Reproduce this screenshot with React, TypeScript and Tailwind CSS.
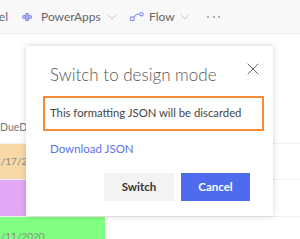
import React from 'react';
import { ChevronDown, X } from 'lucide-react';

const font = { fontFamily: 'Lato, "Open Sans", "Liberation Sans", sans-serif' };

const PowerAppsIcon: React.FC = () => (
  <svg width="10" height="8" viewBox="0 0 10 8" fill="none" stroke="#7b83eb" strokeWidth="1.2" className="shrink-0">
    <circle cx="2" cy="4" r="1.4" />
    <circle cx="5" cy="1.8" r="1.4" />
    <circle cx="8" cy="4" r="1.4" />
    <circle cx="5" cy="6.2" r="1.4" />
  </svg>
);

const FlowIcon: React.FC = () => (
  <svg width="14" height="9" viewBox="0 0 14 9" fill="none" stroke="#8a8fe8" strokeWidth="1.1" className="shrink-0">
    <rect x="0.6" y="5" width="3.4" height="3.4" />
    <circle cx="11.5" cy="2.2" r="1.7" />
    <path d="M4 5 L6.5 2.2 L9.8 2.2" />
  </svg>
);

const CommandBar: React.FC = () => (
  <div className="h-[34px] bg-[#f8f8f8] border-b border-[#ececec] flex items-center text-[12px] text-[#666] shrink-0 whitespace-nowrap">
    <div className="w-[8px] shrink-0 overflow-hidden flex justify-end">
      <span>Excel</span>
    </div>
    <div className="ml-[14px] flex items-center">
      <PowerAppsIcon />
      <span className="ml-[9px] w-[58px] shrink-0">PowerApps</span>
      <ChevronDown size={16} strokeWidth={0.9} className="ml-[5px] shrink-0 text-[#aaa]" />
    </div>
    <div className="ml-[10px] flex items-center">
      <FlowIcon />
      <span className="ml-[5px] w-[23px] shrink-0">Flow</span>
      <ChevronDown size={16} strokeWidth={0.9} className="ml-[5px] shrink-0 text-[#aaa]" />
    </div>
    <div className="ml-[14px] flex items-center gap-[3.5px]">
      <span className="w-[2px] h-[2px] bg-[#999] rounded-full" />
      <span className="w-[2px] h-[2px] bg-[#999] rounded-full" />
      <span className="w-[2px] h-[2px] bg-[#999] rounded-full" />
    </div>
  </div>
);

const Row: React.FC<{ color: string; text?: string; h: string; textClass?: string }> = ({ color, text, h, textClass = '' }) => (
  <div className={`flex border-t border-[#f0f0f0] ${h}`}>
    <div className={`w-[105px] overflow-hidden flex items-center text-[10px] text-[#8a8a8a] whitespace-nowrap ${color}`}>
      {text && <span className={`-ml-[5px] ${textClass}`}>{text}</span>}
    </div>
  </div>
);

const App: React.FC = () => {
  return (
    <div className="relative w-[300px] h-[239px] overflow-hidden bg-white" style={font}>
      <CommandBar />

      <div className="flex flex-col">
        <div className="h-[79px]" />
        <div className="h-[30px] flex items-center text-[10.5px] text-[#777] whitespace-nowrap">
          <span>DueDate</span>
        </div>
        <Row color="bg-[#f9d8a8]" text="1/17/2020" h="h-[36px]" />
        <Row color="bg-[#e2a8f6]" h="h-[37px]" />
        <Row color="bg-[#80ff80]" text="5/11/2020" h="h-[36px]" textClass="mt-[3px]" />
      </div>

      {/* dialog */}
      <div className="absolute left-[26px] top-[46px] w-[247px] h-[170px] bg-white shadow-[0_0_6px_rgba(0,0,0,0.18)] flex flex-col">
        <div className="flex items-start justify-between pl-[24px] pr-[10px] pt-[17px]">
          <h2 className="text-[17px] leading-[24px] font-light text-[#555] whitespace-nowrap">Switch to design mode</h2>
          <X size={20} strokeWidth={1.2} className="-mt-[4px] text-[#666]" />
        </div>
        <div className="mt-[9px] ml-[17px] mr-[9px] h-[35px] border-2 border-[#f98a33] flex items-center pl-[5px] text-[11.3px] text-[#444] whitespace-nowrap">
          This formatting JSON will be discarded
        </div>
        <div className="mt-[9px] pl-[24px] h-[18px] flex items-center text-[11.5px] text-[#5a72ea]">
          Download JSON
        </div>
        <div className="mt-[15px] flex justify-end gap-[7px] pr-[23px]">
          <button className="w-[70px] h-[28px] bg-[#f3f3f3] text-[11.5px] font-bold text-[#333]">Switch</button>
          <button className="w-[69px] h-[28px] bg-[#4f6bed] text-[11.5px] font-bold text-white">Cancel</button>
        </div>
      </div>
    </div>
  );
};

export default App;
